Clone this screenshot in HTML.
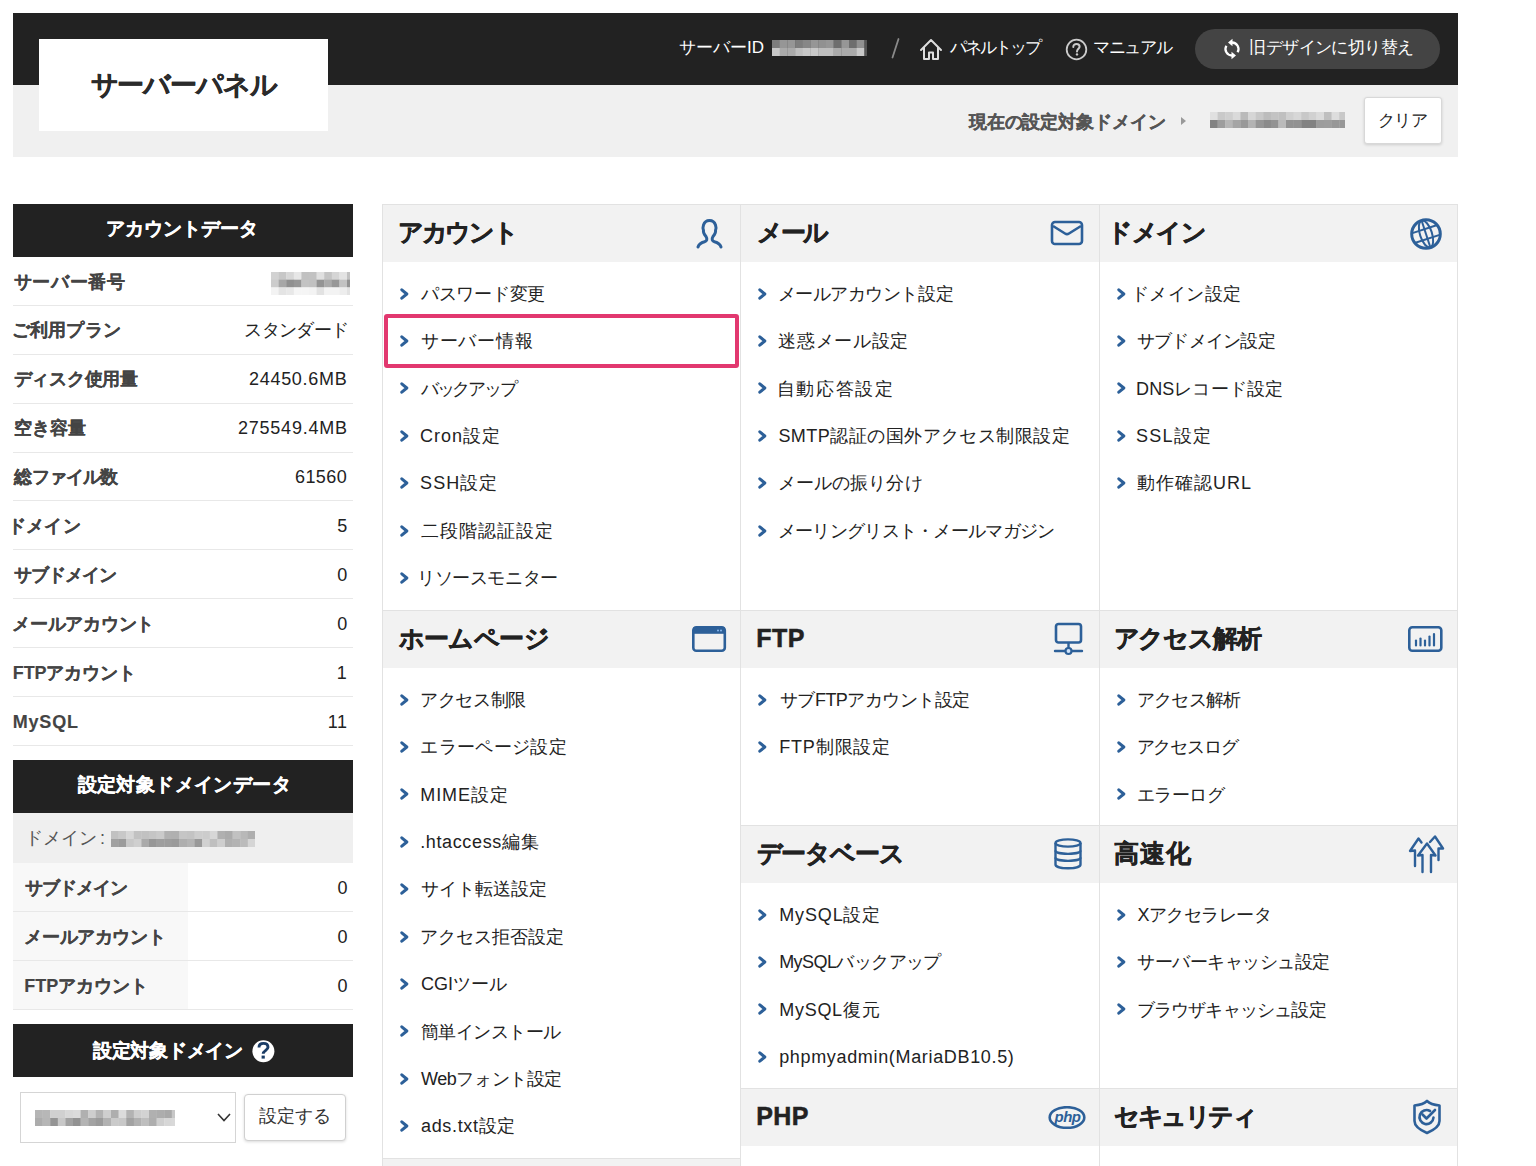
<!DOCTYPE html>
<html><head><meta charset="utf-8"><title>サーバーパネル</title>
<style>
html,body{margin:0;padding:0;background:#fff;}
body{width:1536px;height:1166px;overflow:hidden;position:relative;font-family:"Liberation Sans", sans-serif;}
.t{position:absolute;white-space:nowrap;}
</style></head><body>
<div style="position:absolute;left:13px;top:13px;width:1445px;height:72px;background:#222"></div>
<div style="position:absolute;left:13px;top:85px;width:1445px;height:72px;background:#f0f0f0"></div>
<div style="position:absolute;left:39px;top:39px;width:289px;height:92px;background:#fff"></div>
<div id="t1" class="t" style="left:-116.5px;width:600px;text-align:center;top:68.8px;font-size:27px;line-height:32.4px;color:#2b2b2b;font-weight:bold;letter-spacing:-1.15px;-webkit-text-stroke:0.35px #2b2b2b">サーバーパネル</div>
<div id="t2" class="t" style="left:679.4px;top:37.8px;font-size:17px;line-height:20.4px;color:#fff;font-weight:normal;letter-spacing:-0.08px;">サーバーID</div>
<svg style="position:absolute;left:772px;top:40px" width="95" height="16"><rect x="0.0" y="0.0" width="8.0" height="8.0" fill="rgb(125,125,125)"/><rect x="7.7" y="0.0" width="8.0" height="8.0" fill="rgb(150,150,150)"/><rect x="15.4" y="0.0" width="8.0" height="8.0" fill="rgb(150,150,150)"/><rect x="23.1" y="0.0" width="8.0" height="8.0" fill="rgb(125,125,125)"/><rect x="30.8" y="0.0" width="8.0" height="8.0" fill="rgb(135,135,135)"/><rect x="38.5" y="0.0" width="8.0" height="8.0" fill="rgb(150,150,150)"/><rect x="46.2" y="0.0" width="8.0" height="8.0" fill="rgb(145,145,145)"/><rect x="53.9" y="0.0" width="8.0" height="8.0" fill="rgb(150,150,150)"/><rect x="61.6" y="0.0" width="8.0" height="8.0" fill="rgb(110,110,110)"/><rect x="69.3" y="0.0" width="8.0" height="8.0" fill="rgb(150,150,150)"/><rect x="77.0" y="0.0" width="8.0" height="8.0" fill="rgb(110,110,110)"/><rect x="84.7" y="0.0" width="8.0" height="8.0" fill="rgb(145,145,145)"/><rect x="92.4" y="0.0" width="2.9" height="8.0" fill="rgb(85,85,85)"/><rect x="0.0" y="8.0" width="8.0" height="8.0" fill="rgb(200,200,200)"/><rect x="7.7" y="8.0" width="8.0" height="8.0" fill="rgb(170,170,170)"/><rect x="15.4" y="8.0" width="8.0" height="8.0" fill="rgb(170,170,170)"/><rect x="23.1" y="8.0" width="8.0" height="8.0" fill="rgb(190,190,190)"/><rect x="30.8" y="8.0" width="8.0" height="8.0" fill="rgb(200,200,200)"/><rect x="38.5" y="8.0" width="8.0" height="8.0" fill="rgb(200,200,200)"/><rect x="46.2" y="8.0" width="8.0" height="8.0" fill="rgb(190,190,190)"/><rect x="53.9" y="8.0" width="8.0" height="8.0" fill="rgb(190,190,190)"/><rect x="61.6" y="8.0" width="8.0" height="8.0" fill="rgb(170,170,170)"/><rect x="69.3" y="8.0" width="8.0" height="8.0" fill="rgb(170,170,170)"/><rect x="77.0" y="8.0" width="8.0" height="8.0" fill="rgb(170,170,170)"/><rect x="84.7" y="8.0" width="8.0" height="8.0" fill="rgb(200,200,200)"/><rect x="92.4" y="8.0" width="2.9" height="8.0" fill="rgb(85,85,85)"/></svg>
<svg style="position:absolute;left:888px;top:36px" width="14" height="24"><path d="M4.5 21.5 L10.5 3" stroke="#8a8a8a" stroke-width="1.8" stroke-linecap="round"/></svg>
<svg style="position:absolute;left:919px;top:38px" width="24" height="23" viewBox="0 0 24 23"><path d="M2 12 L12 2 L22 12 M5 9.5 V21 H10 V14.5 H14 V21 H19 V9.5" fill="none" stroke="#ddd" stroke-width="2" stroke-linejoin="round" stroke-linecap="round"/></svg>
<div id="t4" class="t" style="left:949.7px;top:37.8px;font-size:17px;line-height:20.4px;color:#fff;font-weight:normal;letter-spacing:-1.99px;">パネルトップ</div>
<svg style="position:absolute;left:1065px;top:38px" width="23" height="23" viewBox="0 0 23 23"><circle cx="11.5" cy="11.5" r="9.8" fill="none" stroke="#ccc" stroke-width="1.8"/><path d="M8.3 9 C8.3 6.9 9.7 6 11.5 6 C13.4 6 14.6 7.1 14.6 8.7 C14.6 10.6 12 11 12 13.4" fill="none" stroke="#ccc" stroke-width="2" stroke-linecap="round"/><circle cx="12" cy="16.4" r="1.2" fill="#ccc"/></svg>
<div id="t5" class="t" style="left:1093.2px;top:37.8px;font-size:17px;line-height:20.4px;color:#fff;font-weight:normal;letter-spacing:-1.36px;">マニュアル</div>
<div style="position:absolute;left:1195px;top:29px;width:245px;height:40px;background:#444;border-radius:20px"></div>
<svg style="position:absolute;left:1222px;top:37px" width="20" height="24" viewBox="0 0 20 24"><path d="M10 5.5 A6.5 6.5 0 0 1 15.6 15.25" fill="none" stroke="#fff" stroke-width="2.3"/><path d="M4.37 8.75 A6.5 6.5 0 0 0 10 18.5" fill="none" stroke="#fff" stroke-width="2.3"/><path d="M6 5.5 L10.5 1.8 L10.5 9.2 Z" fill="#fff"/><path d="M14 18.5 L9.5 14.8 L9.5 22.2 Z" fill="#fff"/></svg>
<div id="t6" class="t" style="left:1249.2px;top:37.8px;font-size:17px;line-height:20.4px;color:#fff;font-weight:normal;letter-spacing:-0.56px;">旧デザインに切り替え</div>
<div id="t7" class="t" style="left:968.6px;top:111.7px;font-size:18px;line-height:21.6px;color:#555;font-weight:bold;letter-spacing:-0.04px;-webkit-text-stroke:0.25px #555">現在の設定対象ドメイン</div>
<svg style="position:absolute;left:1180px;top:116px" width="7" height="10"><path d="M1 1 L6 5 L1 9 Z" fill="#999"/></svg>
<svg style="position:absolute;left:1210px;top:112px" width="135" height="16"><rect x="0.0" y="0.0" width="7.9" height="8.3" fill="rgb(224,224,224)"/><rect x="7.6" y="0.0" width="7.9" height="8.3" fill="rgb(201,201,201)"/><rect x="15.2" y="0.0" width="7.9" height="8.3" fill="rgb(207,207,207)"/><rect x="22.8" y="0.0" width="7.9" height="8.3" fill="rgb(218,218,218)"/><rect x="30.4" y="0.0" width="7.9" height="8.3" fill="rgb(186,186,186)"/><rect x="38.0" y="0.0" width="7.9" height="8.3" fill="rgb(214,214,214)"/><rect x="45.6" y="0.0" width="7.9" height="8.3" fill="rgb(200,200,200)"/><rect x="53.2" y="0.0" width="7.9" height="8.3" fill="rgb(188,188,188)"/><rect x="60.8" y="0.0" width="7.9" height="8.3" fill="rgb(195,195,195)"/><rect x="68.4" y="0.0" width="7.9" height="8.3" fill="rgb(192,192,192)"/><rect x="76.0" y="0.0" width="7.9" height="8.3" fill="rgb(208,208,208)"/><rect x="83.6" y="0.0" width="7.9" height="8.3" fill="rgb(215,215,215)"/><rect x="91.2" y="0.0" width="7.9" height="8.3" fill="rgb(200,200,200)"/><rect x="98.8" y="0.0" width="7.9" height="8.3" fill="rgb(209,209,209)"/><rect x="106.4" y="0.0" width="7.9" height="8.3" fill="rgb(219,219,219)"/><rect x="114.0" y="0.0" width="7.9" height="8.3" fill="rgb(191,191,191)"/><rect x="121.6" y="0.0" width="7.9" height="8.3" fill="rgb(221,221,221)"/><rect x="129.2" y="0.0" width="6.1" height="8.3" fill="rgb(200,200,200)"/><rect x="0.0" y="8.0" width="7.9" height="8.3" fill="rgb(131,131,131)"/><rect x="7.6" y="8.0" width="7.9" height="8.3" fill="rgb(157,157,157)"/><rect x="15.2" y="8.0" width="7.9" height="8.3" fill="rgb(182,182,182)"/><rect x="22.8" y="8.0" width="7.9" height="8.3" fill="rgb(165,165,165)"/><rect x="30.4" y="8.0" width="7.9" height="8.3" fill="rgb(153,153,153)"/><rect x="38.0" y="8.0" width="7.9" height="8.3" fill="rgb(179,179,179)"/><rect x="45.6" y="8.0" width="7.9" height="8.3" fill="rgb(150,150,150)"/><rect x="53.2" y="8.0" width="7.9" height="8.3" fill="rgb(139,139,139)"/><rect x="60.8" y="8.0" width="7.9" height="8.3" fill="rgb(147,147,147)"/><rect x="68.4" y="8.0" width="7.9" height="8.3" fill="rgb(186,186,186)"/><rect x="76.0" y="8.0" width="7.9" height="8.3" fill="rgb(146,146,146)"/><rect x="83.6" y="8.0" width="7.9" height="8.3" fill="rgb(146,146,146)"/><rect x="91.2" y="8.0" width="7.9" height="8.3" fill="rgb(130,130,130)"/><rect x="98.8" y="8.0" width="7.9" height="8.3" fill="rgb(130,130,130)"/><rect x="106.4" y="8.0" width="7.9" height="8.3" fill="rgb(156,156,156)"/><rect x="114.0" y="8.0" width="7.9" height="8.3" fill="rgb(157,157,157)"/><rect x="121.6" y="8.0" width="7.9" height="8.3" fill="rgb(151,151,151)"/><rect x="129.2" y="8.0" width="6.1" height="8.3" fill="rgb(151,151,151)"/></svg>
<div style="position:absolute;left:1364px;top:97px;width:78px;height:47px;background:#fff;border:1px solid #d8d8d8;box-sizing:border-box;border-radius:3px;box-shadow:0 1px 3px rgba(0,0,0,0.15)"></div>
<div id="t8" class="t" style="left:1102.6px;width:600px;text-align:center;top:110.8px;font-size:17px;line-height:20.4px;color:#222;font-weight:normal;letter-spacing:-0.60px;">クリア</div>
<div style="position:absolute;left:13px;top:204px;width:339.5px;height:53px;background:#222"></div>
<div id="t9" class="t" style="left:-117.8px;width:600px;text-align:center;top:218.1px;font-size:19px;line-height:22.8px;color:#fff;font-weight:bold;letter-spacing:0.00px;-webkit-text-stroke:0.3px #fff">アカウントデータ</div>
<div style="position:absolute;left:13px;top:305px;width:339.5px;height:1px;background:#e8e8e8"></div>
<div id="t10" class="t" style="left:13.6px;top:271.5px;font-size:18px;line-height:21.6px;color:#444;font-weight:bold;letter-spacing:0.65px;-webkit-text-stroke:0.12px #444">サーバー番号</div>
<svg style="position:absolute;left:271px;top:272px" width="79" height="23"><rect x="0.0" y="0.0" width="7.9" height="8.0" fill="rgb(210,210,210)"/><rect x="7.6" y="0.0" width="7.9" height="8.0" fill="rgb(199,199,199)"/><rect x="15.2" y="0.0" width="7.9" height="8.0" fill="rgb(215,215,215)"/><rect x="22.8" y="0.0" width="7.9" height="8.0" fill="rgb(231,231,231)"/><rect x="30.4" y="0.0" width="7.9" height="8.0" fill="rgb(193,193,193)"/><rect x="38.0" y="0.0" width="7.9" height="8.0" fill="rgb(194,194,194)"/><rect x="45.6" y="0.0" width="7.9" height="8.0" fill="rgb(224,224,224)"/><rect x="53.2" y="0.0" width="7.9" height="8.0" fill="rgb(196,196,196)"/><rect x="60.8" y="0.0" width="7.9" height="8.0" fill="rgb(213,213,213)"/><rect x="68.4" y="0.0" width="7.9" height="8.0" fill="rgb(227,227,227)"/><rect x="76.0" y="0.0" width="3.3" height="8.0" fill="rgb(193,193,193)"/><rect x="0.0" y="7.7" width="7.9" height="8.0" fill="rgb(204,204,204)"/><rect x="7.6" y="7.7" width="7.9" height="8.0" fill="rgb(167,167,167)"/><rect x="15.2" y="7.7" width="7.9" height="8.0" fill="rgb(144,144,144)"/><rect x="22.8" y="7.7" width="7.9" height="8.0" fill="rgb(151,151,151)"/><rect x="30.4" y="7.7" width="7.9" height="8.0" fill="rgb(195,195,195)"/><rect x="38.0" y="7.7" width="7.9" height="8.0" fill="rgb(193,193,193)"/><rect x="45.6" y="7.7" width="7.9" height="8.0" fill="rgb(148,148,148)"/><rect x="53.2" y="7.7" width="7.9" height="8.0" fill="rgb(170,170,170)"/><rect x="60.8" y="7.7" width="7.9" height="8.0" fill="rgb(151,151,151)"/><rect x="68.4" y="7.7" width="7.9" height="8.0" fill="rgb(194,194,194)"/><rect x="76.0" y="7.7" width="3.3" height="8.0" fill="rgb(147,147,147)"/><rect x="0.0" y="15.3" width="7.9" height="8.0" fill="rgb(243,243,243)"/><rect x="7.6" y="15.3" width="7.9" height="8.0" fill="rgb(228,228,228)"/><rect x="15.2" y="15.3" width="7.9" height="8.0" fill="rgb(232,232,232)"/><rect x="22.8" y="15.3" width="7.9" height="8.0" fill="rgb(245,245,245)"/><rect x="30.4" y="15.3" width="7.9" height="8.0" fill="rgb(245,245,245)"/><rect x="38.0" y="15.3" width="7.9" height="8.0" fill="rgb(243,243,243)"/><rect x="45.6" y="15.3" width="7.9" height="8.0" fill="rgb(226,226,226)"/><rect x="53.2" y="15.3" width="7.9" height="8.0" fill="rgb(243,243,243)"/><rect x="60.8" y="15.3" width="7.9" height="8.0" fill="rgb(243,243,243)"/><rect x="68.4" y="15.3" width="7.9" height="8.0" fill="rgb(237,237,237)"/><rect x="76.0" y="15.3" width="3.3" height="8.0" fill="rgb(226,226,226)"/></svg>
<div style="position:absolute;left:13px;top:354px;width:339.5px;height:1px;background:#e8e8e8"></div>
<div id="t11" class="t" style="left:12.0px;top:320.4px;font-size:18px;line-height:21.6px;color:#444;font-weight:bold;letter-spacing:0.15px;-webkit-text-stroke:0.12px #444">ご利用プラン</div>
<div id="t12" class="t" style="right:1187.6px;top:320.4px;font-size:18px;line-height:21.6px;color:#222;font-weight:normal;text-align:right;letter-spacing:-0.65px;">スタンダード</div>
<div style="position:absolute;left:13px;top:403px;width:339.5px;height:1px;background:#e8e8e8"></div>
<div id="t13" class="t" style="left:13.6px;top:369.3px;font-size:18px;line-height:21.6px;color:#444;font-weight:bold;letter-spacing:-0.26px;-webkit-text-stroke:0.12px #444">ディスク使用量</div>
<div id="t14" class="t" style="right:1188.6px;top:369.3px;font-size:18px;line-height:21.6px;color:#222;font-weight:normal;text-align:right;letter-spacing:0.70px;">24450.6MB</div>
<div style="position:absolute;left:13px;top:452px;width:339.5px;height:1px;background:#e8e8e8"></div>
<div id="t15" class="t" style="left:13.6px;top:418.3px;font-size:18px;line-height:21.6px;color:#444;font-weight:bold;letter-spacing:0.20px;-webkit-text-stroke:0.12px #444">空き容量</div>
<div id="t16" class="t" style="right:1188.2px;top:418.3px;font-size:18px;line-height:21.6px;color:#222;font-weight:normal;text-align:right;letter-spacing:0.78px;">275549.4MB</div>
<div style="position:absolute;left:13px;top:500px;width:339.5px;height:1px;background:#e8e8e8"></div>
<div id="t17" class="t" style="left:14.4px;top:467.2px;font-size:18px;line-height:21.6px;color:#444;font-weight:bold;letter-spacing:-0.81px;-webkit-text-stroke:0.12px #444">総ファイル数</div>
<div id="t18" class="t" style="right:1188.8px;top:467.2px;font-size:18px;line-height:21.6px;color:#222;font-weight:normal;text-align:right;letter-spacing:0.44px;">61560</div>
<div style="position:absolute;left:13px;top:549px;width:339.5px;height:1px;background:#e8e8e8"></div>
<div id="t19" class="t" style="left:8.0px;top:516.1px;font-size:18px;line-height:21.6px;color:#444;font-weight:bold;letter-spacing:0.22px;-webkit-text-stroke:0.12px #444">ドメイン</div>
<div id="t20" class="t" style="right:1188.8px;top:516.1px;font-size:18px;line-height:21.6px;color:#222;font-weight:normal;text-align:right;letter-spacing:0.00px;">5</div>
<div style="position:absolute;left:13px;top:598px;width:339.5px;height:1px;background:#e8e8e8"></div>
<div id="t21" class="t" style="left:13.6px;top:565.0px;font-size:18px;line-height:21.6px;color:#444;font-weight:bold;letter-spacing:-0.97px;-webkit-text-stroke:0.12px #444">サブドメイン</div>
<div id="t22" class="t" style="right:1188.8px;top:565.0px;font-size:18px;line-height:21.6px;color:#222;font-weight:normal;text-align:right;letter-spacing:0.00px;">0</div>
<div style="position:absolute;left:13px;top:647px;width:339.5px;height:1px;background:#e8e8e8"></div>
<div id="t23" class="t" style="left:12.0px;top:613.9px;font-size:18px;line-height:21.6px;color:#444;font-weight:bold;letter-spacing:-0.25px;-webkit-text-stroke:0.12px #444">メールアカウント</div>
<div id="t24" class="t" style="right:1188.8px;top:613.9px;font-size:18px;line-height:21.6px;color:#222;font-weight:normal;text-align:right;letter-spacing:0.00px;">0</div>
<div style="position:absolute;left:13px;top:696px;width:339.5px;height:1px;background:#e8e8e8"></div>
<div id="t25" class="t" style="left:12.8px;top:662.9px;font-size:18px;line-height:21.6px;color:#444;font-weight:bold;letter-spacing:-0.11px;-webkit-text-stroke:0.12px #444">FTPアカウント</div>
<div id="t26" class="t" style="right:1189.2px;top:662.9px;font-size:18px;line-height:21.6px;color:#222;font-weight:normal;text-align:right;letter-spacing:0.00px;">1</div>
<div style="position:absolute;left:13px;top:745px;width:339.5px;height:1px;background:#e8e8e8"></div>
<div id="t27" class="t" style="left:12.8px;top:711.8px;font-size:18px;line-height:21.6px;color:#444;font-weight:bold;letter-spacing:0.78px;-webkit-text-stroke:0.12px #444">MySQL</div>
<div id="t28" class="t" style="right:1188.4px;top:711.8px;font-size:18px;line-height:21.6px;color:#222;font-weight:normal;text-align:right;letter-spacing:0.56px;">11</div>
<div style="position:absolute;left:13px;top:760px;width:339.5px;height:53px;background:#222"></div>
<div id="t29" class="t" style="left:-115.7px;width:600px;text-align:center;top:774.1px;font-size:19px;line-height:22.8px;color:#fff;font-weight:bold;letter-spacing:0.38px;-webkit-text-stroke:0.3px #fff">設定対象ドメインデータ</div>
<div style="position:absolute;left:13px;top:813px;width:339.5px;height:50px;background:#efefef"></div>
<div id="t30" class="t" style="left:25.0px;top:827.7px;font-size:18px;line-height:21.6px;color:#555;font-weight:normal;letter-spacing:0.00px;">ドメイン<span style="margin-left:3px">:</span></div>
<svg style="position:absolute;left:111px;top:830.5px" width="144" height="16"><rect x="0.0" y="0.0" width="7.9" height="8.3" fill="rgb(193,193,193)"/><rect x="7.6" y="0.0" width="7.9" height="8.3" fill="rgb(200,200,200)"/><rect x="15.2" y="0.0" width="7.9" height="8.3" fill="rgb(214,214,214)"/><rect x="22.8" y="0.0" width="7.9" height="8.3" fill="rgb(194,194,194)"/><rect x="30.4" y="0.0" width="7.9" height="8.3" fill="rgb(193,193,193)"/><rect x="38.0" y="0.0" width="7.9" height="8.3" fill="rgb(197,197,197)"/><rect x="45.6" y="0.0" width="7.9" height="8.3" fill="rgb(202,202,202)"/><rect x="53.2" y="0.0" width="7.9" height="8.3" fill="rgb(177,177,177)"/><rect x="60.8" y="0.0" width="7.9" height="8.3" fill="rgb(176,176,176)"/><rect x="68.4" y="0.0" width="7.9" height="8.3" fill="rgb(197,197,197)"/><rect x="76.0" y="0.0" width="7.9" height="8.3" fill="rgb(195,195,195)"/><rect x="83.6" y="0.0" width="7.9" height="8.3" fill="rgb(205,205,205)"/><rect x="91.2" y="0.0" width="7.9" height="8.3" fill="rgb(204,204,204)"/><rect x="98.8" y="0.0" width="7.9" height="8.3" fill="rgb(215,215,215)"/><rect x="106.4" y="0.0" width="7.9" height="8.3" fill="rgb(176,176,176)"/><rect x="114.0" y="0.0" width="7.9" height="8.3" fill="rgb(171,171,171)"/><rect x="121.6" y="0.0" width="7.9" height="8.3" fill="rgb(193,193,193)"/><rect x="129.2" y="0.0" width="7.9" height="8.3" fill="rgb(184,184,184)"/><rect x="136.8" y="0.0" width="7.5" height="8.3" fill="rgb(174,174,174)"/><rect x="0.0" y="8.0" width="7.9" height="8.3" fill="rgb(161,161,161)"/><rect x="7.6" y="8.0" width="7.9" height="8.3" fill="rgb(155,155,155)"/><rect x="15.2" y="8.0" width="7.9" height="8.3" fill="rgb(200,200,200)"/><rect x="22.8" y="8.0" width="7.9" height="8.3" fill="rgb(207,207,207)"/><rect x="30.4" y="8.0" width="7.9" height="8.3" fill="rgb(170,170,170)"/><rect x="38.0" y="8.0" width="7.9" height="8.3" fill="rgb(151,151,151)"/><rect x="45.6" y="8.0" width="7.9" height="8.3" fill="rgb(158,158,158)"/><rect x="53.2" y="8.0" width="7.9" height="8.3" fill="rgb(157,157,157)"/><rect x="60.8" y="8.0" width="7.9" height="8.3" fill="rgb(154,154,154)"/><rect x="68.4" y="8.0" width="7.9" height="8.3" fill="rgb(174,174,174)"/><rect x="76.0" y="8.0" width="7.9" height="8.3" fill="rgb(180,180,180)"/><rect x="83.6" y="8.0" width="7.9" height="8.3" fill="rgb(153,153,153)"/><rect x="91.2" y="8.0" width="7.9" height="8.3" fill="rgb(209,209,209)"/><rect x="98.8" y="8.0" width="7.9" height="8.3" fill="rgb(191,191,191)"/><rect x="106.4" y="8.0" width="7.9" height="8.3" fill="rgb(206,206,206)"/><rect x="114.0" y="8.0" width="7.9" height="8.3" fill="rgb(175,175,175)"/><rect x="121.6" y="8.0" width="7.9" height="8.3" fill="rgb(179,179,179)"/><rect x="129.2" y="8.0" width="7.9" height="8.3" fill="rgb(187,187,187)"/><rect x="136.8" y="8.0" width="7.5" height="8.3" fill="rgb(213,213,213)"/></svg>
<div style="position:absolute;left:13px;top:863px;width:175px;height:48px;background:#f8f8f8"></div>
<div style="position:absolute;left:13px;top:911px;width:339.5px;height:1px;background:#e8e8e8"></div>
<div id="t31" class="t" style="left:25.0px;top:877.7px;font-size:18px;line-height:21.6px;color:#444;font-weight:bold;letter-spacing:-0.96px;-webkit-text-stroke:0.12px #444">サブドメイン</div>
<div id="t32" class="t" style="right:1188.4px;top:877.7px;font-size:18px;line-height:21.6px;color:#222;font-weight:normal;text-align:right;letter-spacing:0.00px;">0</div>
<div style="position:absolute;left:13px;top:912px;width:175px;height:48px;background:#f8f8f8"></div>
<div style="position:absolute;left:13px;top:960px;width:339.5px;height:1px;background:#e8e8e8"></div>
<div id="t33" class="t" style="left:24.2px;top:926.7px;font-size:18px;line-height:21.6px;color:#444;font-weight:bold;letter-spacing:-0.34px;-webkit-text-stroke:0.12px #444">メールアカウント</div>
<div id="t34" class="t" style="right:1188.4px;top:926.7px;font-size:18px;line-height:21.6px;color:#222;font-weight:normal;text-align:right;letter-spacing:0.00px;">0</div>
<div style="position:absolute;left:13px;top:961px;width:175px;height:48px;background:#f8f8f8"></div>
<div style="position:absolute;left:13px;top:1009px;width:339.5px;height:1px;background:#e8e8e8"></div>
<div id="t35" class="t" style="left:24.2px;top:975.7px;font-size:18px;line-height:21.6px;color:#444;font-weight:bold;letter-spacing:0.00px;-webkit-text-stroke:0.12px #444">FTPアカウント</div>
<div id="t36" class="t" style="right:1188.4px;top:975.7px;font-size:18px;line-height:21.6px;color:#222;font-weight:normal;text-align:right;letter-spacing:0.00px;">0</div>
<div style="position:absolute;left:13px;top:1024px;width:339.5px;height:53px;background:#222"></div>
<div id="t37" class="t" style="left:92.8px;top:1040.1px;font-size:19px;line-height:22.8px;color:#fff;font-weight:bold;letter-spacing:-0.22px;-webkit-text-stroke:0.3px #fff">設定対象ドメイン</div>
<svg style="position:absolute;left:252px;top:1040px" width="23" height="23" viewBox="0 0 23 23"><circle cx="11.4" cy="11.3" r="11" fill="#fff"/><path d="M7 7.4 C7 4.8 9 3.4 11.5 3.4 C14.3 3.4 16 5.1 16 7.3 C16 10.1 11.2 10.6 11.2 13.8" fill="none" stroke="#1b3d66" stroke-width="2.9"/><rect x="9.6" y="15.6" width="3.2" height="3" fill="#1b3d66"/></svg>
<div style="position:absolute;left:20px;top:1092px;width:215.5px;height:51px;background:#fff;border:1px solid #d5d5d5;box-sizing:border-box"></div>
<svg style="position:absolute;left:35px;top:1110px" width="140" height="16"><rect x="0.0" y="0.0" width="7.9" height="8.3" fill="rgb(181,181,181)"/><rect x="7.6" y="0.0" width="7.9" height="8.3" fill="rgb(183,183,183)"/><rect x="15.2" y="0.0" width="7.9" height="8.3" fill="rgb(208,208,208)"/><rect x="22.8" y="0.0" width="7.9" height="8.3" fill="rgb(208,208,208)"/><rect x="30.4" y="0.0" width="7.9" height="8.3" fill="rgb(216,216,216)"/><rect x="38.0" y="0.0" width="7.9" height="8.3" fill="rgb(219,219,219)"/><rect x="45.6" y="0.0" width="7.9" height="8.3" fill="rgb(176,176,176)"/><rect x="53.2" y="0.0" width="7.9" height="8.3" fill="rgb(206,206,206)"/><rect x="60.8" y="0.0" width="7.9" height="8.3" fill="rgb(179,179,179)"/><rect x="68.4" y="0.0" width="7.9" height="8.3" fill="rgb(207,207,207)"/><rect x="76.0" y="0.0" width="7.9" height="8.3" fill="rgb(174,174,174)"/><rect x="83.6" y="0.0" width="7.9" height="8.3" fill="rgb(220,220,220)"/><rect x="91.2" y="0.0" width="7.9" height="8.3" fill="rgb(179,179,179)"/><rect x="98.8" y="0.0" width="7.9" height="8.3" fill="rgb(206,206,206)"/><rect x="106.4" y="0.0" width="7.9" height="8.3" fill="rgb(211,211,211)"/><rect x="114.0" y="0.0" width="7.9" height="8.3" fill="rgb(176,176,176)"/><rect x="121.6" y="0.0" width="7.9" height="8.3" fill="rgb(173,173,173)"/><rect x="129.2" y="0.0" width="7.9" height="8.3" fill="rgb(169,169,169)"/><rect x="136.8" y="0.0" width="3.5" height="8.3" fill="rgb(199,199,199)"/><rect x="0.0" y="8.0" width="7.9" height="8.3" fill="rgb(172,172,172)"/><rect x="7.6" y="8.0" width="7.9" height="8.3" fill="rgb(182,182,182)"/><rect x="15.2" y="8.0" width="7.9" height="8.3" fill="rgb(148,148,148)"/><rect x="22.8" y="8.0" width="7.9" height="8.3" fill="rgb(200,200,200)"/><rect x="30.4" y="8.0" width="7.9" height="8.3" fill="rgb(161,161,161)"/><rect x="38.0" y="8.0" width="7.9" height="8.3" fill="rgb(146,146,146)"/><rect x="45.6" y="8.0" width="7.9" height="8.3" fill="rgb(180,180,180)"/><rect x="53.2" y="8.0" width="7.9" height="8.3" fill="rgb(163,163,163)"/><rect x="60.8" y="8.0" width="7.9" height="8.3" fill="rgb(155,155,155)"/><rect x="68.4" y="8.0" width="7.9" height="8.3" fill="rgb(178,178,178)"/><rect x="76.0" y="8.0" width="7.9" height="8.3" fill="rgb(202,202,202)"/><rect x="83.6" y="8.0" width="7.9" height="8.3" fill="rgb(200,200,200)"/><rect x="91.2" y="8.0" width="7.9" height="8.3" fill="rgb(162,162,162)"/><rect x="98.8" y="8.0" width="7.9" height="8.3" fill="rgb(177,177,177)"/><rect x="106.4" y="8.0" width="7.9" height="8.3" fill="rgb(190,190,190)"/><rect x="114.0" y="8.0" width="7.9" height="8.3" fill="rgb(174,174,174)"/><rect x="121.6" y="8.0" width="7.9" height="8.3" fill="rgb(207,207,207)"/><rect x="129.2" y="8.0" width="7.9" height="8.3" fill="rgb(215,215,215)"/><rect x="136.8" y="8.0" width="3.5" height="8.3" fill="rgb(217,217,217)"/></svg>
<svg style="position:absolute;left:217px;top:1113px" width="14" height="9"><path d="M1 1 L7 7.5 L13 1" fill="none" stroke="#333" stroke-width="1.6"/></svg>
<div style="position:absolute;left:243.5px;top:1094px;width:102px;height:47px;background:#fff;border:1px solid #d0d0d0;box-sizing:border-box;border-radius:4px;box-shadow:0 1px 3px rgba(0,0,0,0.15)"></div>
<div id="t38" class="t" style="left:-5.1px;width:600px;text-align:center;top:1106.2px;font-size:18px;line-height:21.6px;color:#333;font-weight:normal;letter-spacing:-0.13px;">設定する</div>
<div style="position:absolute;left:382px;top:204px;width:358px;height:58px;background:#f2f2f2"></div>
<div style="position:absolute;left:382px;top:204px;width:358px;height:1px;background:#e2e2e2"></div>
<div id="t39" class="t" style="left:397.9px;top:217.2px;font-size:25px;line-height:30.0px;color:#222;font-weight:bold;letter-spacing:-2.23px;-webkit-text-stroke:0.5px #222">アカウント</div>
<svg style="position:absolute;left:694px;top:218px" width="31" height="32" viewBox="0 0 31 32"><path d="M4 29 C5 25.5 8 24.5 10.5 23.8 C13 23 13.5 21 12 18.5 C10 16 9 14.5 9.5 12.5 C8.8 11 8.8 9 9.5 7 C10.5 4 13 2.5 15.5 2.5 C18 2.5 20.5 4 21.5 7 C22.2 9 22.2 11 21.5 12.5 C22 14.5 21 16 19 18.5 C17.5 21 18 23 20.5 23.8 C23 24.5 26 25.5 27 29" fill="none" stroke="#2d6099" stroke-width="3" stroke-linecap="round" stroke-linejoin="round"/></svg>
<svg style="position:absolute;left:399.8px;top:287.5px" width="12" height="13" viewBox="0 0 12 13"><path d="M1.8 1.8 L6.8 6 L1.8 10.2" fill="none" stroke="#2d6099" stroke-width="3" stroke-linecap="round" stroke-linejoin="round"/></svg>
<div id="t40" class="t" style="left:420.9px;top:283.7px;font-size:18px;line-height:21.6px;color:#222;font-weight:normal;letter-spacing:-0.24px;">パスワード変更</div>
<svg style="position:absolute;left:399.8px;top:334.9px" width="12" height="13" viewBox="0 0 12 13"><path d="M1.8 1.8 L6.8 6 L1.8 10.2" fill="none" stroke="#2d6099" stroke-width="3" stroke-linecap="round" stroke-linejoin="round"/></svg>
<div id="t41" class="t" style="left:420.9px;top:331.1px;font-size:18px;line-height:21.6px;color:#222;font-weight:normal;letter-spacing:0.73px;">サーバー情報</div>
<svg style="position:absolute;left:399.8px;top:382.3px" width="12" height="13" viewBox="0 0 12 13"><path d="M1.8 1.8 L6.8 6 L1.8 10.2" fill="none" stroke="#2d6099" stroke-width="3" stroke-linecap="round" stroke-linejoin="round"/></svg>
<div id="t42" class="t" style="left:420.9px;top:378.5px;font-size:18px;line-height:21.6px;color:#222;font-weight:normal;letter-spacing:-2.22px;">バックアップ</div>
<svg style="position:absolute;left:399.8px;top:429.7px" width="12" height="13" viewBox="0 0 12 13"><path d="M1.8 1.8 L6.8 6 L1.8 10.2" fill="none" stroke="#2d6099" stroke-width="3" stroke-linecap="round" stroke-linejoin="round"/></svg>
<div id="t43" class="t" style="left:420.1px;top:425.9px;font-size:18px;line-height:21.6px;color:#222;font-weight:normal;letter-spacing:0.98px;">Cron設定</div>
<svg style="position:absolute;left:399.8px;top:477.1px" width="12" height="13" viewBox="0 0 12 13"><path d="M1.8 1.8 L6.8 6 L1.8 10.2" fill="none" stroke="#2d6099" stroke-width="3" stroke-linecap="round" stroke-linejoin="round"/></svg>
<div id="t44" class="t" style="left:420.1px;top:473.3px;font-size:18px;line-height:21.6px;color:#222;font-weight:normal;letter-spacing:1.04px;">SSH設定</div>
<svg style="position:absolute;left:399.8px;top:524.5px" width="12" height="13" viewBox="0 0 12 13"><path d="M1.8 1.8 L6.8 6 L1.8 10.2" fill="none" stroke="#2d6099" stroke-width="3" stroke-linecap="round" stroke-linejoin="round"/></svg>
<div id="t45" class="t" style="left:420.9px;top:520.7px;font-size:18px;line-height:21.6px;color:#222;font-weight:normal;letter-spacing:1.08px;">二段階認証設定</div>
<svg style="position:absolute;left:399.8px;top:571.9px" width="12" height="13" viewBox="0 0 12 13"><path d="M1.8 1.8 L6.8 6 L1.8 10.2" fill="none" stroke="#2d6099" stroke-width="3" stroke-linecap="round" stroke-linejoin="round"/></svg>
<div id="t46" class="t" style="left:416.9px;top:568.1px;font-size:18px;line-height:21.6px;color:#222;font-weight:normal;letter-spacing:-0.36px;">リソースモニター</div>
<div style="position:absolute;left:740px;top:204px;width:359px;height:58px;background:#f2f2f2"></div>
<div style="position:absolute;left:740px;top:204px;width:359px;height:1px;background:#e2e2e2"></div>
<div id="t47" class="t" style="left:756.7px;top:217.2px;font-size:25px;line-height:30.0px;color:#222;font-weight:bold;letter-spacing:-2.16px;-webkit-text-stroke:0.5px #222">メール</div>
<svg style="position:absolute;left:1050px;top:220px" width="35" height="27" viewBox="0 0 35 27"><rect x="2" y="2" width="30" height="22" rx="3" fill="none" stroke="#2d6099" stroke-width="2.6"/><path d="M3 6 L15 13.5 Q17 14.8 19 13.5 L31 6" fill="none" stroke="#2d6099" stroke-width="2.6"/></svg>
<svg style="position:absolute;left:757.8px;top:287.5px" width="12" height="13" viewBox="0 0 12 13"><path d="M1.8 1.8 L6.8 6 L1.8 10.2" fill="none" stroke="#2d6099" stroke-width="3" stroke-linecap="round" stroke-linejoin="round"/></svg>
<div id="t48" class="t" style="left:777.6px;top:283.7px;font-size:18px;line-height:21.6px;color:#222;font-weight:normal;letter-spacing:-0.45px;">メールアカウント設定</div>
<svg style="position:absolute;left:757.8px;top:334.9px" width="12" height="13" viewBox="0 0 12 13"><path d="M1.8 1.8 L6.8 6 L1.8 10.2" fill="none" stroke="#2d6099" stroke-width="3" stroke-linecap="round" stroke-linejoin="round"/></svg>
<div id="t49" class="t" style="left:778.4px;top:331.1px;font-size:18px;line-height:21.6px;color:#222;font-weight:normal;letter-spacing:0.64px;">迷惑メール設定</div>
<svg style="position:absolute;left:757.8px;top:382.3px" width="12" height="13" viewBox="0 0 12 13"><path d="M1.8 1.8 L6.8 6 L1.8 10.2" fill="none" stroke="#2d6099" stroke-width="3" stroke-linecap="round" stroke-linejoin="round"/></svg>
<div id="t50" class="t" style="left:776.8px;top:378.5px;font-size:18px;line-height:21.6px;color:#222;font-weight:normal;letter-spacing:1.66px;">自動応答設定</div>
<svg style="position:absolute;left:757.8px;top:429.7px" width="12" height="13" viewBox="0 0 12 13"><path d="M1.8 1.8 L6.8 6 L1.8 10.2" fill="none" stroke="#2d6099" stroke-width="3" stroke-linecap="round" stroke-linejoin="round"/></svg>
<div id="t51" class="t" style="left:778.4px;top:425.9px;font-size:18px;line-height:21.6px;color:#222;font-weight:normal;letter-spacing:0.46px;">SMTP認証の国外アクセス制限設定</div>
<svg style="position:absolute;left:757.8px;top:477.1px" width="12" height="13" viewBox="0 0 12 13"><path d="M1.8 1.8 L6.8 6 L1.8 10.2" fill="none" stroke="#2d6099" stroke-width="3" stroke-linecap="round" stroke-linejoin="round"/></svg>
<div id="t52" class="t" style="left:777.6px;top:473.3px;font-size:18px;line-height:21.6px;color:#222;font-weight:normal;letter-spacing:0.13px;">メールの振り分け</div>
<svg style="position:absolute;left:757.8px;top:524.5px" width="12" height="13" viewBox="0 0 12 13"><path d="M1.8 1.8 L6.8 6 L1.8 10.2" fill="none" stroke="#2d6099" stroke-width="3" stroke-linecap="round" stroke-linejoin="round"/></svg>
<div id="t53" class="t" style="left:777.6px;top:520.7px;font-size:18px;line-height:21.6px;color:#222;font-weight:normal;letter-spacing:-0.68px;">メーリングリスト・メールマガジン</div>
<div style="position:absolute;left:1099px;top:204px;width:359px;height:58px;background:#f2f2f2"></div>
<div style="position:absolute;left:1099px;top:204px;width:359px;height:1px;background:#e2e2e2"></div>
<div id="t54" class="t" style="left:1107.0px;top:217.2px;font-size:25px;line-height:30.0px;color:#222;font-weight:bold;letter-spacing:-1.41px;-webkit-text-stroke:0.5px #222">ドメイン</div>
<svg style="position:absolute;left:1410px;top:218px" width="32" height="32" viewBox="0 0 32 32"><circle cx="16" cy="16" r="14.3" fill="none" stroke="#2d6099" stroke-width="3"/><g transform="rotate(-18 16 16)" fill="none" stroke="#2d6099" stroke-width="2"><ellipse cx="16" cy="16" rx="6" ry="14"/><path d="M16 2 V30"/><path d="M2.5 11 H29.5"/><path d="M2.5 21 H29.5"/></g></svg>
<svg style="position:absolute;left:1116.8px;top:287.5px" width="12" height="13" viewBox="0 0 12 13"><path d="M1.8 1.8 L6.8 6 L1.8 10.2" fill="none" stroke="#2d6099" stroke-width="3" stroke-linecap="round" stroke-linejoin="round"/></svg>
<div id="t55" class="t" style="left:1130.5px;top:283.7px;font-size:18px;line-height:21.6px;color:#222;font-weight:normal;letter-spacing:0.54px;">ドメイン設定</div>
<svg style="position:absolute;left:1116.8px;top:334.9px" width="12" height="13" viewBox="0 0 12 13"><path d="M1.8 1.8 L6.8 6 L1.8 10.2" fill="none" stroke="#2d6099" stroke-width="3" stroke-linecap="round" stroke-linejoin="round"/></svg>
<div id="t56" class="t" style="left:1136.9px;top:331.1px;font-size:18px;line-height:21.6px;color:#222;font-weight:normal;letter-spacing:-0.76px;">サブドメイン設定</div>
<svg style="position:absolute;left:1116.8px;top:382.3px" width="12" height="13" viewBox="0 0 12 13"><path d="M1.8 1.8 L6.8 6 L1.8 10.2" fill="none" stroke="#2d6099" stroke-width="3" stroke-linecap="round" stroke-linejoin="round"/></svg>
<div id="t57" class="t" style="left:1136.1px;top:378.5px;font-size:18px;line-height:21.6px;color:#222;font-weight:normal;letter-spacing:0.09px;">DNSレコード設定</div>
<svg style="position:absolute;left:1116.8px;top:429.7px" width="12" height="13" viewBox="0 0 12 13"><path d="M1.8 1.8 L6.8 6 L1.8 10.2" fill="none" stroke="#2d6099" stroke-width="3" stroke-linecap="round" stroke-linejoin="round"/></svg>
<div id="t58" class="t" style="left:1136.1px;top:425.9px;font-size:18px;line-height:21.6px;color:#222;font-weight:normal;letter-spacing:1.18px;">SSL設定</div>
<svg style="position:absolute;left:1116.8px;top:477.1px" width="12" height="13" viewBox="0 0 12 13"><path d="M1.8 1.8 L6.8 6 L1.8 10.2" fill="none" stroke="#2d6099" stroke-width="3" stroke-linecap="round" stroke-linejoin="round"/></svg>
<div id="t59" class="t" style="left:1136.9px;top:473.3px;font-size:18px;line-height:21.6px;color:#222;font-weight:normal;letter-spacing:1.01px;">動作確認URL</div>
<div style="position:absolute;left:382px;top:610px;width:358px;height:58px;background:#f2f2f2"></div>
<div style="position:absolute;left:382px;top:610px;width:358px;height:1px;background:#e2e2e2"></div>
<div id="t60" class="t" style="left:398.6px;top:623.2px;font-size:25px;line-height:30.0px;color:#222;font-weight:bold;letter-spacing:-0.58px;-webkit-text-stroke:0.5px #222">ホームページ</div>
<svg style="position:absolute;left:692px;top:626px" width="35" height="27" viewBox="0 0 35 27"><rect x="1.3" y="1.3" width="31.5" height="23.5" rx="3" fill="none" stroke="#2d6099" stroke-width="2.6"/><rect x="1.3" y="1.3" width="31.5" height="6.5" fill="#2d6099"/><circle cx="26" cy="4.5" r="1" fill="#8ab8ee"/><circle cx="29" cy="4.5" r="1" fill="#8ab8ee"/></svg>
<svg style="position:absolute;left:399.8px;top:693.5px" width="12" height="13" viewBox="0 0 12 13"><path d="M1.8 1.8 L6.8 6 L1.8 10.2" fill="none" stroke="#2d6099" stroke-width="3" stroke-linecap="round" stroke-linejoin="round"/></svg>
<div id="t61" class="t" style="left:420.2px;top:689.7px;font-size:18px;line-height:21.6px;color:#222;font-weight:normal;letter-spacing:-0.40px;">アクセス制限</div>
<svg style="position:absolute;left:399.8px;top:740.9px" width="12" height="13" viewBox="0 0 12 13"><path d="M1.8 1.8 L6.8 6 L1.8 10.2" fill="none" stroke="#2d6099" stroke-width="3" stroke-linecap="round" stroke-linejoin="round"/></svg>
<div id="t62" class="t" style="left:420.2px;top:737.1px;font-size:18px;line-height:21.6px;color:#222;font-weight:normal;letter-spacing:0.36px;">エラーページ設定</div>
<svg style="position:absolute;left:399.8px;top:788.3px" width="12" height="13" viewBox="0 0 12 13"><path d="M1.8 1.8 L6.8 6 L1.8 10.2" fill="none" stroke="#2d6099" stroke-width="3" stroke-linecap="round" stroke-linejoin="round"/></svg>
<div id="t63" class="t" style="left:420.2px;top:784.5px;font-size:18px;line-height:21.6px;color:#222;font-weight:normal;letter-spacing:0.96px;">MIME設定</div>
<svg style="position:absolute;left:399.8px;top:835.7px" width="12" height="13" viewBox="0 0 12 13"><path d="M1.8 1.8 L6.8 6 L1.8 10.2" fill="none" stroke="#2d6099" stroke-width="3" stroke-linecap="round" stroke-linejoin="round"/></svg>
<div id="t64" class="t" style="left:420.2px;top:831.9px;font-size:18px;line-height:21.6px;color:#222;font-weight:normal;letter-spacing:0.63px;">.htaccess編集</div>
<svg style="position:absolute;left:399.8px;top:883.1px" width="12" height="13" viewBox="0 0 12 13"><path d="M1.8 1.8 L6.8 6 L1.8 10.2" fill="none" stroke="#2d6099" stroke-width="3" stroke-linecap="round" stroke-linejoin="round"/></svg>
<div id="t65" class="t" style="left:421.0px;top:879.3px;font-size:18px;line-height:21.6px;color:#222;font-weight:normal;letter-spacing:0.00px;">サイト転送設定</div>
<svg style="position:absolute;left:399.8px;top:930.5px" width="12" height="13" viewBox="0 0 12 13"><path d="M1.8 1.8 L6.8 6 L1.8 10.2" fill="none" stroke="#2d6099" stroke-width="3" stroke-linecap="round" stroke-linejoin="round"/></svg>
<div id="t66" class="t" style="left:420.2px;top:926.7px;font-size:18px;line-height:21.6px;color:#222;font-weight:normal;letter-spacing:-0.01px;">アクセス拒否設定</div>
<svg style="position:absolute;left:399.8px;top:977.9px" width="12" height="13" viewBox="0 0 12 13"><path d="M1.8 1.8 L6.8 6 L1.8 10.2" fill="none" stroke="#2d6099" stroke-width="3" stroke-linecap="round" stroke-linejoin="round"/></svg>
<div id="t67" class="t" style="left:421.0px;top:974.1px;font-size:18px;line-height:21.6px;color:#222;font-weight:normal;letter-spacing:0.00px;">CGIツール</div>
<svg style="position:absolute;left:399.8px;top:1025.3px" width="12" height="13" viewBox="0 0 12 13"><path d="M1.8 1.8 L6.8 6 L1.8 10.2" fill="none" stroke="#2d6099" stroke-width="3" stroke-linecap="round" stroke-linejoin="round"/></svg>
<div id="t68" class="t" style="left:421.0px;top:1021.5px;font-size:18px;line-height:21.6px;color:#222;font-weight:normal;letter-spacing:-0.57px;">簡単インストール</div>
<svg style="position:absolute;left:399.8px;top:1072.7px" width="12" height="13" viewBox="0 0 12 13"><path d="M1.8 1.8 L6.8 6 L1.8 10.2" fill="none" stroke="#2d6099" stroke-width="3" stroke-linecap="round" stroke-linejoin="round"/></svg>
<div id="t69" class="t" style="left:421.0px;top:1068.9px;font-size:18px;line-height:21.6px;color:#222;font-weight:normal;letter-spacing:-0.40px;">Webフォント設定</div>
<svg style="position:absolute;left:399.8px;top:1120.1px" width="12" height="13" viewBox="0 0 12 13"><path d="M1.8 1.8 L6.8 6 L1.8 10.2" fill="none" stroke="#2d6099" stroke-width="3" stroke-linecap="round" stroke-linejoin="round"/></svg>
<div id="t70" class="t" style="left:421.0px;top:1116.3px;font-size:18px;line-height:21.6px;color:#222;font-weight:normal;letter-spacing:0.66px;">ads.txt設定</div>
<div style="position:absolute;left:740px;top:610px;width:359px;height:58px;background:#f2f2f2"></div>
<div style="position:absolute;left:740px;top:610px;width:359px;height:1px;background:#e2e2e2"></div>
<div id="t71" class="t" style="left:756.2px;top:623.2px;font-size:25px;line-height:30.0px;color:#222;font-weight:bold;letter-spacing:0.56px;-webkit-text-stroke:0.5px #222">FTP</div>
<svg style="position:absolute;left:1053px;top:622px" width="31" height="35" viewBox="0 0 31 35"><rect x="3" y="2" width="25" height="18.5" rx="2.5" fill="none" stroke="#2d6099" stroke-width="2.6"/><path d="M15.5 21 V26" stroke="#2d6099" stroke-width="2.4"/><path d="M2 29 H29" stroke="#2d6099" stroke-width="2.4" stroke-linecap="round"/><circle cx="15.5" cy="29" r="3" fill="#cfe3fa" stroke="#2d6099" stroke-width="2.2"/></svg>
<svg style="position:absolute;left:757.8px;top:693.5px" width="12" height="13" viewBox="0 0 12 13"><path d="M1.8 1.8 L6.8 6 L1.8 10.2" fill="none" stroke="#2d6099" stroke-width="3" stroke-linecap="round" stroke-linejoin="round"/></svg>
<div id="t72" class="t" style="left:780.0px;top:689.7px;font-size:18px;line-height:21.6px;color:#222;font-weight:normal;letter-spacing:-0.53px;">サブFTPアカウント設定</div>
<svg style="position:absolute;left:757.8px;top:740.9px" width="12" height="13" viewBox="0 0 12 13"><path d="M1.8 1.8 L6.8 6 L1.8 10.2" fill="none" stroke="#2d6099" stroke-width="3" stroke-linecap="round" stroke-linejoin="round"/></svg>
<div id="t73" class="t" style="left:779.2px;top:737.1px;font-size:18px;line-height:21.6px;color:#222;font-weight:normal;letter-spacing:0.83px;">FTP制限設定</div>
<div style="position:absolute;left:1099px;top:610px;width:359px;height:58px;background:#f2f2f2"></div>
<div style="position:absolute;left:1099px;top:610px;width:359px;height:1px;background:#e2e2e2"></div>
<div id="t74" class="t" style="left:1113.5px;top:623.2px;font-size:25px;line-height:30.0px;color:#222;font-weight:bold;letter-spacing:-1.19px;-webkit-text-stroke:0.5px #222">アクセス解析</div>
<svg style="position:absolute;left:1408px;top:626px" width="35" height="27" viewBox="0 0 35 27"><rect x="1.3" y="1.3" width="32" height="23.5" rx="3" fill="none" stroke="#2d6099" stroke-width="2.6"/><g stroke="#2d6099" stroke-width="2.2" stroke-linecap="round"><path d="M8 19.5 V14.5"/><path d="M12.5 19.5 V12.5"/><path d="M17 19.5 V14.5"/><path d="M21.5 19.5 V10.5"/><path d="M26 19.5 V8"/></g></svg>
<svg style="position:absolute;left:1116.8px;top:693.5px" width="12" height="13" viewBox="0 0 12 13"><path d="M1.8 1.8 L6.8 6 L1.8 10.2" fill="none" stroke="#2d6099" stroke-width="3" stroke-linecap="round" stroke-linejoin="round"/></svg>
<div id="t75" class="t" style="left:1136.6px;top:689.7px;font-size:18px;line-height:21.6px;color:#222;font-weight:normal;letter-spacing:-0.64px;">アクセス解析</div>
<svg style="position:absolute;left:1116.8px;top:740.9px" width="12" height="13" viewBox="0 0 12 13"><path d="M1.8 1.8 L6.8 6 L1.8 10.2" fill="none" stroke="#2d6099" stroke-width="3" stroke-linecap="round" stroke-linejoin="round"/></svg>
<div id="t76" class="t" style="left:1136.6px;top:737.1px;font-size:18px;line-height:21.6px;color:#222;font-weight:normal;letter-spacing:-1.12px;">アクセスログ</div>
<svg style="position:absolute;left:1116.8px;top:788.3px" width="12" height="13" viewBox="0 0 12 13"><path d="M1.8 1.8 L6.8 6 L1.8 10.2" fill="none" stroke="#2d6099" stroke-width="3" stroke-linecap="round" stroke-linejoin="round"/></svg>
<div id="t77" class="t" style="left:1136.6px;top:784.5px;font-size:18px;line-height:21.6px;color:#222;font-weight:normal;letter-spacing:-0.46px;">エラーログ</div>
<div style="position:absolute;left:740px;top:825px;width:359px;height:58px;background:#f2f2f2"></div>
<div style="position:absolute;left:740px;top:825px;width:359px;height:1px;background:#e2e2e2"></div>
<div id="t78" class="t" style="left:756.6px;top:838.2px;font-size:25px;line-height:30.0px;color:#222;font-weight:bold;letter-spacing:-1.11px;-webkit-text-stroke:0.5px #222">データベース</div>
<svg style="position:absolute;left:1054px;top:838px" width="29" height="34" viewBox="0 0 29 34"><g fill="none" stroke="#2d6099" stroke-width="2.4"><ellipse cx="14" cy="5" rx="12.5" ry="3.6"/><path d="M1.5 5 V26.5 C1.5 31.5 26.5 31.5 26.5 26.5 V5"/><path d="M1.5 12.5 C1.5 17 26.5 17 26.5 12.5"/><path d="M1.5 19.5 C1.5 24 26.5 24 26.5 19.5"/></g></svg>
<svg style="position:absolute;left:757.8px;top:908.5px" width="12" height="13" viewBox="0 0 12 13"><path d="M1.8 1.8 L6.8 6 L1.8 10.2" fill="none" stroke="#2d6099" stroke-width="3" stroke-linecap="round" stroke-linejoin="round"/></svg>
<div id="t79" class="t" style="left:779.2px;top:904.7px;font-size:18px;line-height:21.6px;color:#222;font-weight:normal;letter-spacing:0.86px;">MySQL設定</div>
<svg style="position:absolute;left:757.8px;top:955.9px" width="12" height="13" viewBox="0 0 12 13"><path d="M1.8 1.8 L6.8 6 L1.8 10.2" fill="none" stroke="#2d6099" stroke-width="3" stroke-linecap="round" stroke-linejoin="round"/></svg>
<div id="t80" class="t" style="left:779.2px;top:952.1px;font-size:18px;line-height:21.6px;color:#222;font-weight:normal;letter-spacing:-0.57px;">MySQLバックアップ</div>
<svg style="position:absolute;left:757.8px;top:1003.3px" width="12" height="13" viewBox="0 0 12 13"><path d="M1.8 1.8 L6.8 6 L1.8 10.2" fill="none" stroke="#2d6099" stroke-width="3" stroke-linecap="round" stroke-linejoin="round"/></svg>
<div id="t81" class="t" style="left:779.2px;top:999.5px;font-size:18px;line-height:21.6px;color:#222;font-weight:normal;letter-spacing:0.73px;">MySQL復元</div>
<svg style="position:absolute;left:757.8px;top:1050.7px" width="12" height="13" viewBox="0 0 12 13"><path d="M1.8 1.8 L6.8 6 L1.8 10.2" fill="none" stroke="#2d6099" stroke-width="3" stroke-linecap="round" stroke-linejoin="round"/></svg>
<div id="t82" class="t" style="left:779.2px;top:1046.9px;font-size:18px;line-height:21.6px;color:#222;font-weight:normal;letter-spacing:0.66px;">phpmyadmin(MariaDB10.5)</div>
<div style="position:absolute;left:1099px;top:825px;width:359px;height:58px;background:#f2f2f2"></div>
<div style="position:absolute;left:1099px;top:825px;width:359px;height:1px;background:#e2e2e2"></div>
<div id="t83" class="t" style="left:1114.3px;top:838.2px;font-size:25px;line-height:30.0px;color:#222;font-weight:bold;letter-spacing:0.96px;-webkit-text-stroke:0.5px #222">高速化</div>
<svg style="position:absolute;left:1405px;top:835px" width="40" height="39" viewBox="0 0 40 39"><g fill="none" stroke="#2d6099" stroke-width="2.4" stroke-linecap="round" stroke-linejoin="round"><path d="M10 31 V15.5 L5 16 L13.5 3.5 L16.5 7.5"/><path d="M17.5 37 V20 L13 20.5 L22 8.5 L30.5 20.5 L26 20 V37"/><path d="M25 7 L30 1.5 L38 13.5 L33.5 13.5 V25"/></g></svg>
<svg style="position:absolute;left:1116.8px;top:908.5px" width="12" height="13" viewBox="0 0 12 13"><path d="M1.8 1.8 L6.8 6 L1.8 10.2" fill="none" stroke="#2d6099" stroke-width="3" stroke-linecap="round" stroke-linejoin="round"/></svg>
<div id="t84" class="t" style="left:1137.4px;top:904.7px;font-size:18px;line-height:21.6px;color:#222;font-weight:normal;letter-spacing:-0.51px;">Xアクセラレータ</div>
<svg style="position:absolute;left:1116.8px;top:955.9px" width="12" height="13" viewBox="0 0 12 13"><path d="M1.8 1.8 L6.8 6 L1.8 10.2" fill="none" stroke="#2d6099" stroke-width="3" stroke-linecap="round" stroke-linejoin="round"/></svg>
<div id="t85" class="t" style="left:1137.4px;top:952.1px;font-size:18px;line-height:21.6px;color:#222;font-weight:normal;letter-spacing:-0.51px;">サーバーキャッシュ設定</div>
<svg style="position:absolute;left:1116.8px;top:1003.3px" width="12" height="13" viewBox="0 0 12 13"><path d="M1.8 1.8 L6.8 6 L1.8 10.2" fill="none" stroke="#2d6099" stroke-width="3" stroke-linecap="round" stroke-linejoin="round"/></svg>
<div id="t86" class="t" style="left:1136.6px;top:999.5px;font-size:18px;line-height:21.6px;color:#222;font-weight:normal;letter-spacing:-0.80px;">ブラウザキャッシュ設定</div>
<div style="position:absolute;left:740px;top:1088px;width:359px;height:58px;background:#f2f2f2"></div>
<div style="position:absolute;left:740px;top:1088px;width:359px;height:1px;background:#e2e2e2"></div>
<div id="t87" class="t" style="left:756.2px;top:1101.2px;font-size:25px;line-height:30.0px;color:#222;font-weight:bold;letter-spacing:0.40px;-webkit-text-stroke:0.5px #222">PHP</div>
<svg style="position:absolute;left:1048px;top:1106px" width="39" height="24" viewBox="0 0 39 24"><ellipse cx="19" cy="11.5" rx="17.3" ry="10.3" fill="none" stroke="#2d6099" stroke-width="2.6"/><text x="19.5" y="16" text-anchor="middle" font-family="Liberation Sans, sans-serif" font-style="italic" font-weight="bold" font-size="15" fill="#2d6099" letter-spacing="-0.5">php</text></svg>
<div style="position:absolute;left:1099px;top:1088px;width:359px;height:58px;background:#f2f2f2"></div>
<div style="position:absolute;left:1099px;top:1088px;width:359px;height:1px;background:#e2e2e2"></div>
<div id="t88" class="t" style="left:1114.3px;top:1101.2px;font-size:25px;line-height:30.0px;color:#222;font-weight:bold;letter-spacing:-2.54px;-webkit-text-stroke:0.5px #222">セキュリティ</div>
<svg style="position:absolute;left:1412px;top:1099px" width="30" height="37" viewBox="0 0 30 37"><g fill="none" stroke="#2d6099" stroke-width="2.6" stroke-linejoin="round" stroke-linecap="round"><path d="M15 2 C12.5 4.5 8 6 2.5 6.5 V22 C2.5 27 8 31 15 34 C22 31 27.5 27 27.5 22 V6.5 C22 6 17.5 4.5 15 2 Z"/><path d="M21.5 18.5 A7 7 0 1 1 18 12"/><path d="M10.5 15.5 L14.5 19.5 L23 11"/></g></svg>
<div style="position:absolute;left:382px;top:1158px;width:358px;height:58px;background:#f2f2f2"></div>
<div style="position:absolute;left:382px;top:1158px;width:358px;height:1px;background:#e2e2e2"></div>
<div id="t89" class="t" style="left:398.0px;top:1171.2px;font-size:25px;line-height:30.0px;color:#222;font-weight:bold;letter-spacing:0.00px;-webkit-text-stroke:0.5px #222"></div>
<div style="position:absolute;left:382px;top:204px;width:1px;height:1000px;background:#e2e2e2"></div>
<div style="position:absolute;left:740px;top:204px;width:1px;height:1000px;background:#e2e2e2"></div>
<div style="position:absolute;left:1099px;top:204px;width:1px;height:1000px;background:#e2e2e2"></div>
<div style="position:absolute;left:1457px;top:204px;width:1px;height:1000px;background:#e2e2e2"></div>
<div style="position:absolute;left:384px;top:314px;width:355px;height:53.5px;border:4px solid #e2386f;box-sizing:border-box;border-radius:3px"></div>
</body></html>
